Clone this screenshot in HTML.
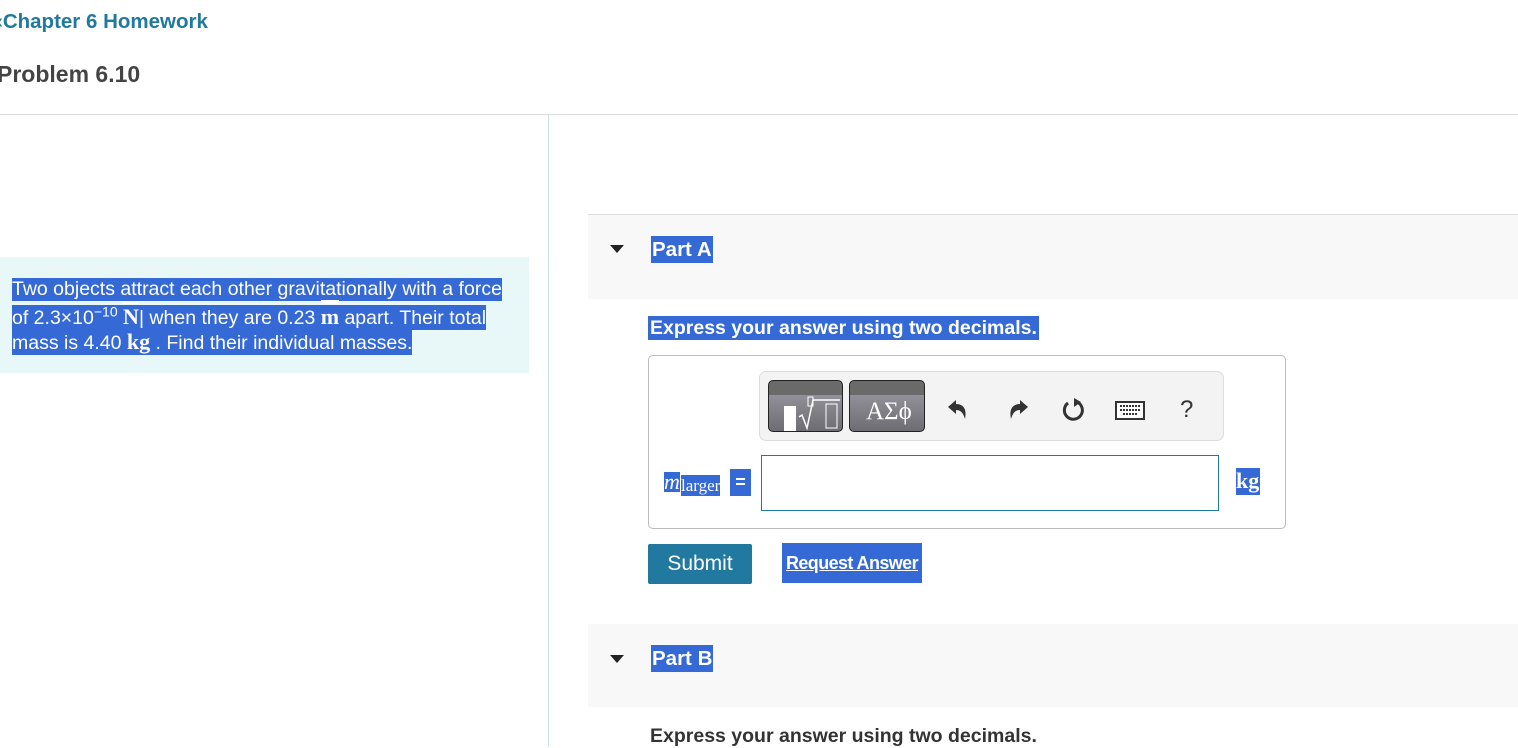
<!DOCTYPE html>
<html><head><style>
body{margin:0;width:1518px;height:747px;position:relative;overflow:hidden;background:#fff;font-family:"Liberation Sans",Arial,sans-serif;}
.a{position:absolute;white-space:nowrap;}
.sel{background:#3469d6;color:#fff;}
.serif{font-family:"Liberation Serif",serif;}
</style></head><body>
<div class="a" style="left:-4px;top:10px;font-size:20.5px;font-weight:bold;color:#1f7a9e;">‹Chapter 6 Homework</div>
<div class="a" style="left:-3px;top:61px;font-size:23px;font-weight:bold;color:#444;">Problem 6.10</div>
<div class="a" style="left:0;top:114px;width:1518px;height:1px;background:#ddd;"></div>
<div class="a" style="left:548px;top:115px;width:1px;height:632px;background:#c9dcea;"></div>
<div class="a" style="left:0;top:257px;width:529px;height:116px;background:#e8f7f8;"></div>
<div class="a sel" style="left:12px;top:278px;font-size:19.5px;line-height:23px;">Two objects attract each other gravitationally with a force</div>
<div class="a sel" style="left:12px;top:305px;font-size:19.5px;line-height:24px;">of 2.3×10<sup style="font-size:14px;line-height:0">−10</sup> <span class="serif" style="font-size:22px;font-weight:bold;border-top:2px solid #fff">N</span>| when they are 0.23 <span class="serif" style="font-size:22px;font-weight:bold;border-top:4px solid #fff">m</span> apart. Their total</div>
<div class="a sel" style="left:12px;top:330px;font-size:19.5px;line-height:23px;">mass is 4.40 <span class="serif" style="font-size:22px;font-weight:bold">kg</span> . Find their individual masses.</div>

<div class="a" style="left:588px;top:214px;width:930px;height:1px;background:#ddd;"></div>
<div class="a" style="left:588px;top:215px;width:930px;height:84px;background:#f8f8f8;"></div>
<div class="a" style="left:610px;top:245px;width:0;height:0;border-left:7px solid transparent;border-right:7px solid transparent;border-top:8px solid #222;"></div>
<div class="a sel" style="left:651px;top:236px;height:27px;padding:0 1px;font-size:20.5px;font-weight:bold;line-height:27px;">Part A</div>
<div class="a sel" style="left:648px;top:316px;height:24px;padding:0 2px;font-size:19.5px;font-weight:bold;line-height:24px;">Express your answer using two decimals.</div>

<div class="a" style="left:648px;top:355px;width:636px;height:172px;border:1px solid #bbb;border-radius:5px;"></div>
<div class="a" style="left:759px;top:371px;width:463px;height:68px;background:#f3f3f3;border:1px solid #ddd;border-radius:7px;"></div>
<div class="a" style="left:768px;top:380px;width:73px;height:50px;border:1px solid #222;border-radius:5px;background:linear-gradient(#6a6a6a 0,#6a6a6a 14px,#929099 14px,#6e6d72);overflow:hidden;"></div>
<div class="a" style="left:784px;top:406px;width:12px;height:25px;background:#fff;"></div>
<svg class="a" style="left:798px;top:396px" width="42" height="34" viewBox="0 0 42 34"><path d="M1 21 L4 19 L9 32 L15 4 H42" fill="none" stroke="#fff" stroke-width="1.5"/><rect x="10" y="1" width="5" height="9" fill="none" stroke="#fff"/><rect x="28" y="8" width="11" height="24" fill="none" stroke="#fff"/></svg>
<div class="a" style="left:849px;top:380px;width:74px;height:50px;border:1px solid #222;border-radius:5px;background:linear-gradient(#6a6a6a 0,#6a6a6a 14px,#929099 14px,#6e6d72);"></div>
<div class="a serif" style="left:866px;top:398px;color:#fff;font-size:25px;">ΑΣϕ</div>
<svg class="a" style="left:945px;top:397px" width="26" height="26" viewBox="0 0 26 26"><path d="M3 10 L11 3 V7 C19 7 22 13 20 22 C18 15 15 13 11 13 V17 Z" fill="#333"/></svg>
<svg class="a" style="left:1005px;top:397px" width="26" height="26" viewBox="0 0 26 26"><path d="M23 10 L15 3 V7 C7 7 4 13 6 22 C8 15 11 13 15 13 V17 Z" fill="#333"/></svg>
<svg class="a" style="left:1059px;top:396px" width="28" height="28" viewBox="0 0 28 28"><path d="M18 6 A9 9 0 1 1 9 7" fill="none" stroke="#333" stroke-width="3"/><path d="M15 2 L22 6 L15 11 Z" fill="#333"/></svg>
<svg class="a" style="left:1115px;top:401px" width="30" height="20" viewBox="0 0 30 20"><rect x="1" y="1" width="28" height="17" fill="#fff" stroke="#333" stroke-width="2"/><path d="M5 5h20M5 9h20M8 13h14" stroke="#333" stroke-width="2" stroke-dasharray="2 1"/></svg>
<div class="a" style="left:1180px;top:396px;font-size:24px;color:#333;">?</div>

<div class="a sel serif" style="left:664px;top:472px;height:20px;font-size:22px;line-height:20px;"><i>m</i></div>
<div class="a sel serif" style="left:681px;top:475px;height:21px;font-size:17px;line-height:21px;">larger</div>
<div class="a sel" style="left:730px;top:469px;width:21px;height:27px;text-align:center;font-size:18px;font-weight:bold;line-height:26px;">=</div>
<div class="a" style="left:761px;top:455px;width:456px;height:54px;border:1px solid #1f7a9e;"></div>
<div class="a sel serif" style="left:1236px;top:468px;width:24px;height:27px;font-size:22px;font-weight:bold;line-height:26px;">kg</div>

<div class="a" style="left:648px;top:544px;width:104px;height:40px;background:#22799f;border-radius:2px;color:#fff;font-size:21px;line-height:40px;text-align:center;">Submit</div>
<div class="a sel" style="left:782px;top:543px;width:140px;height:40px;font-size:18px;font-weight:bold;line-height:40px;text-align:center;text-decoration:underline;letter-spacing:-0.6px;">Request Answer</div>

<div class="a" style="left:588px;top:624px;width:930px;height:83px;background:#f8f8f8;"></div>
<div class="a" style="left:610px;top:655px;width:0;height:0;border-left:7px solid transparent;border-right:7px solid transparent;border-top:8px solid #222;"></div>
<div class="a sel" style="left:651px;top:645px;height:27px;padding:0 1px;font-size:20.5px;font-weight:bold;line-height:27px;">Part B</div>
<div class="a" style="left:650px;top:725px;font-size:19.5px;font-weight:bold;color:#333;">Express your answer using two decimals.</div>
</body></html>
